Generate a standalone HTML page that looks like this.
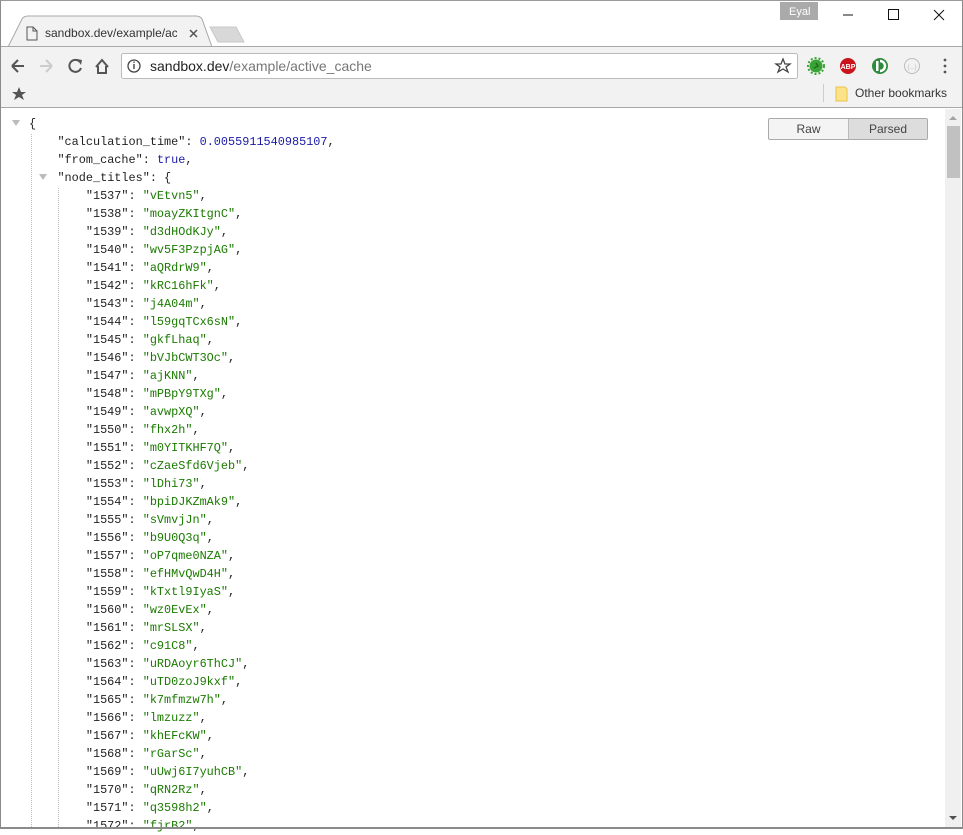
<!DOCTYPE html>
<html><head><meta charset="utf-8"><style>
*{margin:0;padding:0;box-sizing:border-box}
body{width:963px;height:829px;overflow:hidden;background:#fff;font-family:"Liberation Sans",sans-serif;position:relative}
.abs{position:absolute}
#win{position:absolute;left:0;top:0;width:963px;height:829px;border:1px solid #8a8a8a;border-top:1px solid #9a9a9a}
#tool{position:absolute;left:1px;top:46px;width:961px;height:62px;background:#f2f2f2;border-top:1px solid #a8a8a8;border-bottom:1px solid #a8a8a8}
.code{position:absolute;font-family:"Liberation Mono",monospace;font-size:11.85px;line-height:18px;white-space:pre;color:#222}
.s{color:#1a7a00}
.n{color:#1a1aa6}
.k{color:#222}
</style></head><body>
<div id="win"></div>
<svg class="abs" style="left:0;top:0" width="963" height="48">
<path d="M8 47 L22 19 Q24 16 28 16 L196 16 Q200 16 202 19 L212 47" fill="#f2f2f2" stroke="#a8a8a8"/>
<path d="M210 27 L236 27 L244 42 L218 42 Z" fill="#d8d8d8" stroke="#c8c8c8"/>
<rect x="780" y="2" width="38" height="18" fill="#aaa"/>
<text x="789" y="15" font-family="Liberation Sans" font-size="11" fill="#fff">Eyal</text>
<line x1="843" y1="15" x2="853" y2="15" stroke="#111"/>
<rect x="888.5" y="9.5" width="10" height="10" fill="none" stroke="#111"/>
<path d="M934 10 L944 20 M944 10 L934 20" stroke="#111"/>
<path d="M27 27 L33 27 L37 31 L37 40 L27 40 Z M33 27 L33 31 L37 31" fill="none" stroke="#555"/>
<path d="M190 30 L197 37 M197 30 L190 37" stroke="#555" stroke-width="1.5"/>
</svg>
<div class="abs" style="left:45px;top:26px;font-size:12px;color:#333;width:132px;overflow:hidden;white-space:nowrap">sandbox.dev/example/ac</div>
<div id="tool"></div>
<svg class="abs" style="left:0;top:46px" width="963" height="62">
<path d="M12 20 L24 20 M12 20 L18 14 M12 20 L18 26" stroke="#555" stroke-width="2" fill="none"/>
<path d="M52 20 L40 20 M52 20 L46 14 M52 20 L46 26" stroke="#ccc" stroke-width="2" fill="none"/>
<path d="M80 16 A6 6 0 1 0 81 22" stroke="#555" stroke-width="2" fill="none"/><path d="M77 13 L82 14 L81 19 Z" fill="#555"/>
<path d="M96 21 L102 14 L108 21 M98 20 L98 27 L106 27 L106 20" stroke="#555" stroke-width="2" fill="none"/>
<rect x="121.5" y="7.5" width="676" height="25" rx="2" fill="#fff" stroke="#bbb"/>
<circle cx="134" cy="20" r="6" fill="none" stroke="#444" stroke-width="1.3"/><rect x="133.3" y="18" width="1.4" height="5" fill="#444"/><rect x="133.3" y="15.5" width="1.4" height="1.4" fill="#444"/>
<path d="M783 13 L785 18 L790 18 L786 21 L788 26 L783 23 L778 26 L780 21 L776 18 L781 18 Z" fill="none" stroke="#444" stroke-width="1.3"/>
<circle cx="816" cy="20" r="6.5" fill="#3aa335"/><circle cx="816" cy="20" r="8" fill="none" stroke="#3aa335" stroke-width="2" stroke-dasharray="2 2"/>
<path d="M816 17 L818 20 L814 22" stroke="#1d6e1a" stroke-width="1.5" fill="none"/>
<circle cx="848" cy="20" r="8" fill="#c8141a"/><text x="848" y="23" text-anchor="middle" font-size="7" font-weight="bold" fill="#fff" font-family="Liberation Sans">ABP</text>
<circle cx="880" cy="20" r="8" fill="#2e8b3d"/><rect x="876" y="15" width="2.5" height="10" fill="#fff"/><path d="M880 15 A5 5 0 0 1 880 25" stroke="#fff" stroke-width="2.5" fill="none"/>
<circle cx="912" cy="20" r="7.5" fill="none" stroke="#bbb"/><text x="912" y="23" text-anchor="middle" font-size="6" fill="#bbb" font-family="Liberation Sans">{...}</text>
<circle cx="945" cy="14" r="1.4" fill="#555"/><circle cx="945" cy="20" r="1.4" fill="#555"/><circle cx="945" cy="26" r="1.4" fill="#555"/>
<path d="M19 41 L21 46 L26 46 L22 49 L24 54 L19 51 L14 54 L16 49 L12 46 L17 46 Z" fill="#555"/>
<line x1="823.5" y1="38" x2="823.5" y2="56" stroke="#ccc"/>
<path d="M836 41 L845 41 L847 43 L847 55 L836 55 Z" fill="#fce38a" stroke="#e6c34a"/>
</svg>
<div class="abs" style="left:150px;top:58px;font-size:14px;color:#222">sandbox.dev<span style="color:#777">/example/active_cache</span></div>
<div class="abs" style="left:855px;top:86px;font-size:12px;color:#333">Other bookmarks</div>
<div class="abs" style="left:768px;top:118px;width:160px;height:22px;border:1px solid #aaa;border-radius:2px;background:#f4f4f4;font-size:12px;color:#444">
<div class="abs" style="left:0;top:0;width:80px;height:20px;text-align:center;line-height:20px;border-right:1px solid #bbb">Raw</div>
<div class="abs" style="left:80px;top:0;width:78px;height:20px;text-align:center;line-height:20px;background:#ddd">Parsed</div>
</div>
<div class="abs" style="left:945px;top:109px;width:16px;height:718px;background:#f0f0f0"></div>
<div class="abs" style="left:947px;top:126px;width:13px;height:52px;background:#c1c1c1"></div>
<svg class="abs" style="left:945px;top:112px" width="16" height="715"><path d="M4 8 L12 8 L8 4 Z" fill="#a3a3a3"/><path d="M4 704 L12 704 L8 708 Z" fill="#505050"/></svg>
<div class="abs" style="left:31px;top:134px;height:693px;border-left:1px dotted #bbb"></div>
<div class="abs" style="left:58px;top:188px;height:639px;border-left:1px dotted #bbb"></div>
<svg class="abs" style="left:0;top:110px" width="60" height="80"><path d="M12 10 L20 10 L16 16 Z" fill="#bbb"/><path d="M39 64 L47 64 L43 70 Z" fill="#bbb"/></svg>
<div class="code" style="left:29px;top:115px">{
    <span class="k">"calculation_time"</span>: <span class="n">0.0055911540985107</span>,
    <span class="k">"from_cache"</span>: <span class="n">true</span>,
    <span class="k">"node_titles"</span>: {
        "1537": <span class="s">"vEtvn5"</span>,
        "1538": <span class="s">"moayZKItgnC"</span>,
        "1539": <span class="s">"d3dHOdKJy"</span>,
        "1540": <span class="s">"wv5F3PzpjAG"</span>,
        "1541": <span class="s">"aQRdrW9"</span>,
        "1542": <span class="s">"kRC16hFk"</span>,
        "1543": <span class="s">"j4A04m"</span>,
        "1544": <span class="s">"l59gqTCx6sN"</span>,
        "1545": <span class="s">"gkfLhaq"</span>,
        "1546": <span class="s">"bVJbCWT3Oc"</span>,
        "1547": <span class="s">"ajKNN"</span>,
        "1548": <span class="s">"mPBpY9TXg"</span>,
        "1549": <span class="s">"avwpXQ"</span>,
        "1550": <span class="s">"fhx2h"</span>,
        "1551": <span class="s">"m0YITKHF7Q"</span>,
        "1552": <span class="s">"cZaeSfd6Vjeb"</span>,
        "1553": <span class="s">"lDhi73"</span>,
        "1554": <span class="s">"bpiDJKZmAk9"</span>,
        "1555": <span class="s">"sVmvjJn"</span>,
        "1556": <span class="s">"b9U0Q3q"</span>,
        "1557": <span class="s">"oP7qme0NZA"</span>,
        "1558": <span class="s">"efHMvQwD4H"</span>,
        "1559": <span class="s">"kTxtl9IyaS"</span>,
        "1560": <span class="s">"wz0EvEx"</span>,
        "1561": <span class="s">"mrSLSX"</span>,
        "1562": <span class="s">"c91C8"</span>,
        "1563": <span class="s">"uRDAoyr6ThCJ"</span>,
        "1564": <span class="s">"uTD0zoJ9kxf"</span>,
        "1565": <span class="s">"k7mfmzw7h"</span>,
        "1566": <span class="s">"lmzuzz"</span>,
        "1567": <span class="s">"khEFcKW"</span>,
        "1568": <span class="s">"rGarSc"</span>,
        "1569": <span class="s">"uUwj6I7yuhCB"</span>,
        "1570": <span class="s">"qRN2Rz"</span>,
        "1571": <span class="s">"q3598h2"</span>,
        "1572": <span class="s">"fjrB2"</span>,</div>
<div class="abs" style="left:0;top:827px;width:963px;height:2px;background:#8a8a8a"></div>
</body></html>
